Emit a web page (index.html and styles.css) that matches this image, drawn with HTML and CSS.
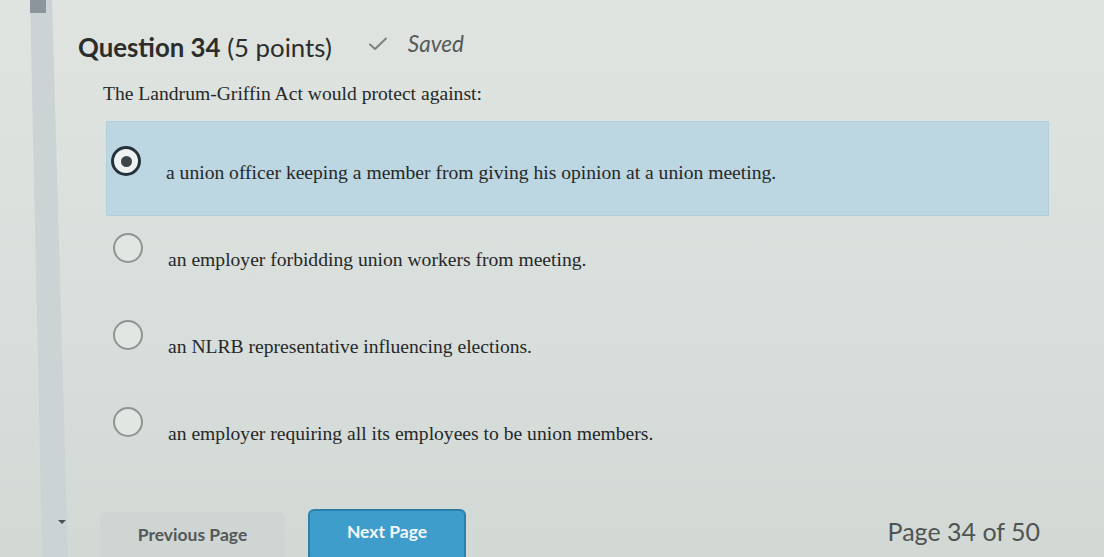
FILE: index.html
```html
<!DOCTYPE html>
<html lang="en">
<head>
<meta charset="utf-8">
<title>Question 34</title>
<link rel="stylesheet" href="styles.css">
</head>
<body>
<div class="page">
  <div class="scrollbar">
    <div class="thumb"></div>
    <div class="arrow"></div>
  </div>
  <main class="main">
    <div class="title-row">
      <h2 class="title"><span class="qnum">Question 34</span> <span class="points">(5 points)</span></h2>
      <div class="saved">
        <svg class="check" viewBox="0 0 20 16" width="20" height="16"><path d="M2 8.5 L7 13 L18 2.5" fill="none" stroke="#7c8280" stroke-width="2" stroke-linecap="round" stroke-linejoin="round"/></svg>
        <span>Saved</span>
      </div>
    </div>
    <p class="question">The Landrum-Griffin Act would protect against:</p>
    <div class="options">
      <div class="option selected">
        <span class="radio checked"><span class="dot"></span></span>
        <span class="label">a union officer keeping a member from giving his opinion at a union meeting.</span>
      </div>
      <div class="option">
        <span class="radio"></span>
        <span class="label">an employer forbidding union workers from meeting.</span>
      </div>
      <div class="option">
        <span class="radio"></span>
        <span class="label">an NLRB representative influencing elections.</span>
      </div>
      <div class="option">
        <span class="radio"></span>
        <span class="label">an employer requiring all its employees to be union members.</span>
      </div>
    </div>
    <div class="footer">
      <div class="buttons">
        <button class="btn prev">Previous Page</button>
        <button class="btn next">Next Page</button>
      </div>
      <div class="pager">Page 34 of 50</div>
    </div>
  </main>
</div>
</body>
</html>
```
FILE: styles.css
```css
* { box-sizing: border-box; }
html, body { margin: 0; padding: 0; }
body {
  width: 1104px;
  height: 557px;
  overflow: hidden;
  background: linear-gradient(to bottom, #dfe4e0 0%, #d8dedb 60%, #d2d9d5 100%);
  font-family: "Lato", "Liberation Sans", sans-serif;
  color: #333;
}
.page {
  display: flex;
  height: 557px;
}
.scrollbar {
  position: relative;
  width: 38px;
  margin-left: 30px;
  height: 557px;
  display: flex;
  flex-direction: column;
  justify-content: space-between;
}
.scrollbar::before {
  content: "";
  position: absolute;
  inset: 0;
  background: #ccd3d5;
  clip-path: polygon(0 0, 58% 0, 100% 100%, 32% 100%);
}
.thumb {
  position: relative;
  width: 16px;
  height: 13px;
  background: #8c959b;
}
.arrow {
  position: relative;
  align-self: flex-end;
  margin-right: 2px;
  margin-bottom: 33px;
  width: 0;
  height: 0;
  border-left: 4px solid transparent;
  border-right: 4px solid transparent;
  border-top: 4px solid #4a4f52;
}
.main {
  flex: 1;
  padding-left: 10px;
  padding-right: 55px;
  display: flex;
  flex-direction: column;
}
.title-row {
  display: flex;
  align-items: center;
  gap: 36px;
  margin-top: 31px;
  height: 32px;
}
.title {
  margin: 0;
  font-size: 25.8px;
  font-weight: 400;
  color: #2b2d2d;
  line-height: 32px;
}
.qnum { font-weight: 700; }
.saved {
  display: flex;
  align-items: center;
  gap: 20px;
  font-style: italic;
  font-size: 22.5px;
  color: #555a59;
  margin-top: -7px;
}
.check { display: block; }
.question {
  margin: 19px 0 0 25px;
  font-family: "Liberation Serif", "Times New Roman", serif;
  font-size: 19.6px;
  line-height: 24px;
  color: #262828;
}
.options {
  margin-top: 15px;
  margin-left: 28px;
  display: flex;
  flex-direction: column;
}
.option {
  display: flex;
  align-items: flex-start;
  height: 87px;
  padding-top: 17px;
  padding-left: 7px;
}
.option.selected {
  height: 95px;
  padding-top: 24px;
  padding-left: 4px;
  background: #bcd7e2;
  border: 1px solid #b2cfda;
}
.radio {
  flex: none;
  width: 30px;
  height: 30px;
  border-radius: 50%;
  border: 2px solid #8f9392;
  background: #e2e6e3;
  display: flex;
  align-items: center;
  justify-content: center;
}
.radio.checked {
  border: 3px solid #24323c;
  background: #eef2f3;
}
.dot {
  width: 11px;
  height: 11px;
  border-radius: 50%;
  background: #3e4448;
}
.label {
  margin-left: 25px;
  margin-top: 15px;
  font-family: "Liberation Serif", "Times New Roman", serif;
  font-size: 19.6px;
  line-height: 24px;
  color: #262828;
}
.footer {
  margin-top: auto;
  display: flex;
  justify-content: space-between;
  align-items: flex-start;
  margin-left: 22px;
  height: 48px;
}
.buttons {
  display: flex;
  align-items: flex-start;
  gap: 23px;
}
.btn {
  font-family: "Lato", "Liberation Sans", sans-serif;
  font-weight: 700;
  font-size: 17.5px;
  border-radius: 6px;
  cursor: pointer;
}
.prev {
  margin-top: 3px;
  width: 185px;
  height: 52px;
  background: #ced5d3;
  border: none;
  color: #545858;
  padding-bottom: 8px;
}
.next {
  width: 158px;
  height: 54px;
  background: #3f9dcc;
  border: 2px solid #2d7fab;
  color: #f4f8fa;
  padding-bottom: 10px;
}
.pager {
  margin-top: 7px;
  margin-right: 9px;
  font-size: 25px;
  color: #4f5453;
}
```
